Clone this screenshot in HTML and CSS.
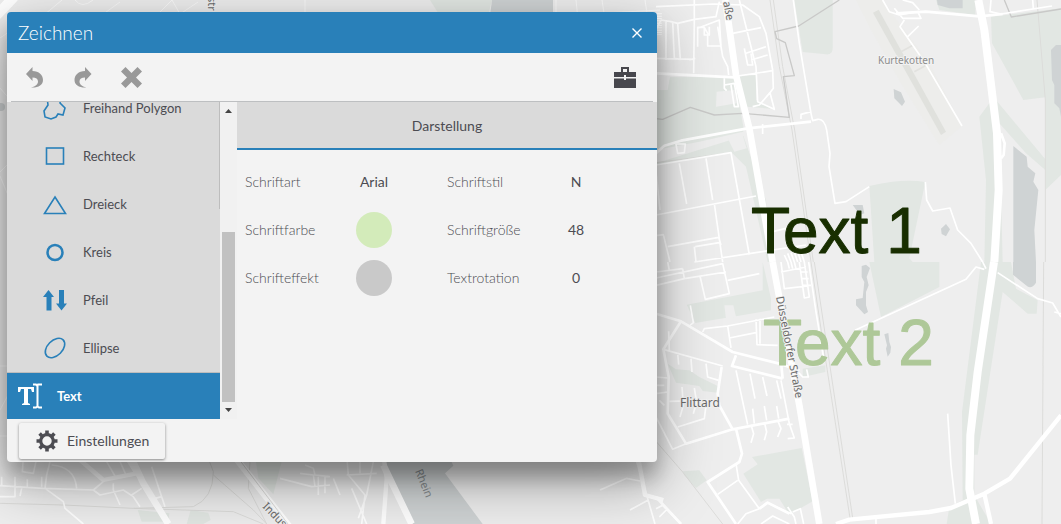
FILE: index.html
```html
<!DOCTYPE html>
<html lang="de">
<head>
<meta charset="utf-8">
<title>Zeichnen</title>
<link rel="stylesheet" href="styles.css">
</head>
<body>
<svg class="map" viewBox="0 0 1061 524" preserveAspectRatio="xMinYMin slice" role="img" aria-label="Karte">
  <rect class="land" width="1061" height="524"/>
  <!-- north-east quarter -->
  <g transform="translate(656 0) scale(.33333)">
    <path class="green" d="M415 0H530V145Q530 165 510 163L440 156ZM840 0H958V45L850 30ZM1005 50L1215 25V525L1168 570V292L1102 300L1008 130ZM0 232L235 230L262 380V395L130 425L0 450ZM0 490L262 408L330 600L345 786H335L270 500L225 455L0 495ZM240 230L300 225V300L345 326L270 320ZM1000 310L1020 300L1168 478V510L1110 460L1030 370L1040 786H985L990 540L970 350ZM640 558Q740 534 808 546L760 775L770 786H655Z"/>
    <path class="land" d="M0 230H42L35 270H0ZM182 275L235 270L242 310L180 320ZM215 415L260 405L272 445L235 455Z"/>
    <path class="field" d="M600 0H680L715 50L820 190L918 378L850 435L735 250L640 80Z"/>
    <path class="runway" d="M651 38L668 29L870 395L855 405Z"/>
    <path class="minor runway-line" d="M735 155L772 135M775 215L808 197"/>
    <path class="water" d="M843 0H920V25H880L845 15ZM1215 135L1200 135 1185 150 1188 240 1195 255V310L1210 325 1215 350ZM713 267L735 277 747 305 738 318 715 295ZM855 686L870 672 882 688 870 709 857 702ZM590 615H620L625 640 612 645ZM590 660L612 662 607 680 595 676ZM1072 438L1112 470 1115 500 1138 520 1132 545 1147 570 1135 690 1140 786H1072Z"/>
    <path class="rail" d="M342 0L370 200 408 390 465 786M352 0L380 200 416 390 472 786M1143 0L1168 300V786M0 488L225 458"/>
    <path class="border" d="M0 356L20 358 103 322 175 345 260 340 400 352 382 230 415 227 388 128 362 116 357 95 428 78 550 0M1045 0L1066 51 1215 27"/>
    <path class="minor" d="M0 20L175 12L260 15L310 50L330 100L350 210L352 265L342 278L310 315L290 320M250 0L300 200 305 305 355 328 342 278M115 0V60L113 220M0 90L15 60 45 65 65 70 115 58 180 50 190 5M30 60V180M50 65L55 175 73 178 65 70M0 175L115 178M125 140V82H145L155 100V138H195L190 60L125 85M145 85V105H160V80M185 80L200 170 215 200 218 225M230 100L315 83M245 228L350 212M270 160L330 140M265 145L275 195H290L285 160M285 180L335 165M205 235V265L212 272M205 255L235 250L247 320H235L225 255M100 180L118 175M412 0L430 130 465 340 470 362 485 358Q505 355 512 390L522 460 519 500 537 610 570 605 640 560M435 357V343L465 335M320 372V402M0 645L300 588M0 495L225 458 280 765M70 490L92 612M150 475L170 600M175 612L200 786M0 515L12 630M0 707L22 704 42 786M35 740L188 712 195 735M115 740L120 786M118 740L190 728M60 432H88L85 458 65 460ZM115 786L450 735M330 700L410 680M385 765L395 786M395 760L405 786M405 758L415 786M415 756L425 786M425 755L435 786M435 755L445 786M680 0L700 35 730 45 785 35 795 55 740 55 715 25M740 0L770 8 790 30M745 60L732 80 808 190 918 378M755 110L788 78M808 546L812 600 830 633 882 624 905 690 945 730 980 786M1005 0L1002 35 1035 42 1188 18M1130 0L1132 25"/>
    <path class="medium" d="M0 220L235 232M0 460L25 437 75 422 275 385 465 365M720 40L810 35 970 49 1040 42M1035 400L1046 430 1043 465 1035 475"/>
    <path class="major" d="M208 0L240 225 280 385 350 786"/>
    <path class="highway" d="M967 0L985 90 1023 400 1028 570 1015 786"/>
    <path class="ladder" d="M4 40V105M8 40V105M12 40V105"/>
  </g>
  <!-- south-east quarter -->
  <g transform="translate(656 262) scale(.33333)">
    <path class="green" d="M640 0H850V75L675 165ZM320 0L345 110 345 145 118 183 92 128 320 85ZM975 0H1065L1080 80 1145 115 1142 155H1115L1040 90 965 578H955V700L990 760 1005 786H872L880 735 920 715 918 450ZM288 585L437 558 470 718 405 755 395 750 370 710 333 710 315 720 262 635 305 607ZM440 320L508 310V330L440 345ZM35 305L60 322 100 325 130 345 185 372V392L140 387 130 372 60 362ZM80 628L130 625 152 655 120 678 85 640Z"/>
    <path class="land" d="M205 130L232 130 240 165 210 170Z"/>
    <path class="water" d="M1071 0H1140V62Q1125 85 1110 70L1071 38ZM617 12L630 8 642 18 632 45 638 70 630 90V130L636 150 625 157 600 130V112L620 108 625 60 617 45ZM685 217L697 213 700 240 705 255 703 272 695 284 690 260 693 250Z"/>
    <path class="rail" d="M465 0L510 300 582 768M475 0L520 300 590 768M1163 0L1158 786M0 538L80 630 200 786"/>
    <path class="minor" d="M0 48L200 5L220 95 148 112 132 42M0 70L85 50 80 20M0 30L80 20M35 0L40 25M85 50L210 30M215 55L310 35M103 130L112 182 102 190M140 210L145 200 215 192 355 165M215 192L225 258M220 228L300 212M300 172L303 248 365 250M312 170V245M22 262L200 312M65 275L68 308M105 290L108 330M150 305L155 345 188 355M240 325L275 488M282 335L297 410M320 345L333 402M362 355L375 410M375 355L400 485 415 528 395 530M0 345L35 348M0 395L35 390M38 208L40 265M0 465L50 562 90 545M65 495L145 470 152 415 40 418M78 375L82 430 72 465M115 378L122 420 112 455M290 440L295 485M325 432L332 475M362 432L368 470M285 488L293 515 285 542M325 480L332 510 325 535M365 475L375 500 365 525M393 487H410M25 370H0M25 430L10 415M240 605L248 655 310 740 333 722 405 755M185 697L245 655M245 786L270 755 310 740M315 786L350 762 400 786M395 735L415 765 420 786M410 750L433 740 443 786M0 740L20 730 75 786M10 765L35 740M375 0L385 80 455 72M375 30L450 15M395 0L400 20M405 0L410 20M415 0L420 20M430 0L445 108 460 105 445 0M435 30H455M435 50H458M438 70H465M458 0L480 150 505 300M408 310L440 345 457 345 452 322M597 205L930 52 960 15 985 22M980 0L990 20M1025 32L1145 110 1190 123 1215 165M1215 155L1195 150M875 455L885 610 898 725M660 770V786"/>
    <path class="medium" d="M0 155L75 178 230 270 370 305 430 325M75 178L22 262 38 345 35 455 90 545 230 502 190 430 185 395 197 315M240 280L228 312 380 350M230 502L400 470M240 500L258 575 250 600 155 660 240 786M310 740L335 722 400 755M375 300L380 350M0 705L75 786"/>
    <path class="major" d="M350 0L430 430 490 786"/>
    <path class="medium wide" d="M540 786L580 773 820 750 885 738 985 695 1062 650 1215 460M985 695L1005 786"/>
    <path class="highway" d="M1014 0L965 330 943 520 940 680 960 786"/>
  </g>
  <!-- strip below and beside the window -->
  <g transform="translate(0 455) scale(.33333)">
    <path class="green" d="M413 165L508 175 505 200H425ZM572 165L625 173 632 195 610 207H560ZM765 0H850L820 118 775 70Z"/>
    <path class="water" d="M1145 0H1345L1360 32 1335 55 1448 207H1240L1160 40Z"/>
    <path class="rail" d="M0 145L190 150 400 160 580 155Q640 130 640 50L625 10M640 60L760 165 800 207M400 160L700 170 790 207M750 20L745 100 800 207"/>
    <path class="minor" d="M0 92L130 100 280 105 300 120 370 105 400 125 420 155M0 125H45V65M5 65V95M60 123L65 100M82 73V100M70 10L67 50 100 55 110 10M155 0L140 60 135 100 190 140 195 160 250 207M155 30Q225 35 230 100M125 65V95M280 105L310 80M340 85V105L360 150M395 120L425 100M320 20L350 72M360 20L378 60M455 35L495 155M465 130L485 125M840 70L935 95 990 90M900 55L940 60 945 95M915 30L940 40 945 60 990 65M955 65V120M975 65V115M1040 0L1045 60 1095 120 1085 207M1100 207L1055 100M1120 20L1100 120 1075 190M1040 60L1130 55M1080 20V55M1000 70L1020 120M1800 105L1880 70 1920 78M1890 165L1945 135M1910 20L1940 120 1965 207"/>
    <path class="medium wide" d="M240 15L310 75 410 55 385 15M1150 0L1160 70 1150 207M1915 10L1935 120 1990 135"/>
    <path class="major" d="M390 0L430 85 505 207M700 0L880 230M1150 30L1235 207"/>
    <path class="rail" d="M715 10L870 215"/>
  </g>
  <path class="corner-road" d="M-4 16L14 -3"/>
  <path class="green" d="M430 0H492L488 16H440Z"/>
  <path class="water" d="M492 0H553V16H490Z"/>
  <path class="thin" d="M38 20L62 0M95 20L120 2M75 0Q82 9 93 0M158 14L172 0 180 14 198 2M305 0V20M556 0V20M576 0L578 20M602 0L605 20M645 0L648 20M605 13L660 10M0 38L18 26M0 88L12 102M0 172L10 162M0 176L10 200M0 366H10M0 410L8 395M0 436H10"/>
  <circle class="water" cx="1" cy="107" r="4"/>
  <text class="place small" x="878" y="64">Kurtekotten</text>
  <text class="place" x="680" y="407">Flittard</text>
  <text class="drawn drawn-dark" x="751" y="253">Text 1</text>
  <text class="drawn drawn-light" x="763" y="365">Text 2</text>
  <text class="street" transform="translate(776 297) rotate(79)">Düsseldorfer Straße</text>
  <text class="street" transform="translate(723 2) rotate(79)">aße</text>
  <text class="street" transform="translate(208 -3) rotate(90)">str</text>
  <text class="street" transform="translate(262 507) rotate(46)">Indus</text>
  <text class="river" transform="translate(415 471) rotate(68)">Rhein</text>
</svg>

<section class="window" aria-labelledby="window-title">
  <header class="titlebar">
    <h1 id="window-title">Zeichnen</h1>
    <button class="close" type="button" aria-label="Schließen">
      <svg width="10" height="10" viewBox="0 0 10 10"><path d="M.5.5l9 9M9.5.5l-9 9" fill="none" stroke="currentColor" stroke-width="1.4"/></svg>
    </button>
  </header>
  <div class="toolbar">
    <button type="button" aria-label="Rückgängig"><svg width="18" height="21" viewBox="0 0 18 21"><path d="M0 7L6.500 0V4C13 4 17 8 17 13C17 18 12 21 5 20.500C10 19.500 12 17 12 14.500C12 12 10 10.500 6.500 10.500V14Z"/></svg></button>
    <button type="button" aria-label="Wiederholen"><svg width="18" height="21" viewBox="0 0 18 21"><path d="M17.500 7L11 0V4C4.500 4 .5 8 .5 13C.5 18 5.500 21 12.500 20.500C7.500 19.500 5.500 17 5.500 14.500C5.500 12 7.500 10.500 11 10.500V14Z"/></svg></button>
    <button type="button" aria-label="Löschen"><svg width="21" height="21" viewBox="0 0 21 21"><path d="M4.500 0L10.500 6 16.500 0 21 4.500 15 10.500 21 16.500 16.500 21 10.500 15 4.500 21 0 16.500 6 10.500 0 4.500Z"/></svg></button>
    <button class="toolbox" type="button" aria-label="Werkzeuge"><svg width="22" height="21" viewBox="0 0 22 21"><path fill-rule="evenodd" d="M7 5V0H15V5H22V10H12V8H10V10H0V5ZM9 2V5H13V2ZM0 11.500H10V13H12V11.500H22V21H0Z"/></svg></button>
  </div>
  <div class="body">
    <nav class="tools" aria-label="Zeichenwerkzeuge">
      <button class="tool" type="button"><svg width="24" height="24" viewBox="0 0 24 24"><path d="M4 1L5 9 1 15 2 21 8 23 13 21 15 18 20 19 22 12 17 7 18 1Z"/></svg>Freihand Polygon</button>
      <button class="tool" type="button"><svg width="24" height="24" viewBox="0 0 24 24"><rect x="3.500" y="4" width="17" height="16"/></svg>Rechteck</button>
      <button class="tool" type="button"><svg width="24" height="24" viewBox="0 0 24 24"><path d="M12 5L22.500 21.500H1.500Z"/></svg>Dreieck</button>
      <button class="tool" type="button"><svg width="24" height="24" viewBox="0 0 24 24"><circle class="bold" cx="12" cy="12.500" r="7.500"/></svg>Kreis</button>
      <button class="tool" type="button"><svg width="24" height="24" viewBox="0 0 24 24"><path class="solid" d="M5.500 2L11 9H8.500V22.500H3.500V9H0ZM16 2H21V15.500H24L18.500 22.500 13 15.500H16Z"/></svg>Pfeil</button>
      <button class="tool" type="button"><svg width="24" height="24" viewBox="0 0 24 24"><ellipse cx="12" cy="12" rx="11.500" ry="7.500" transform="rotate(-45 12 12)"/></svg>Ellipse</button>
      <button class="tool active" type="button"><svg width="25" height="26" viewBox="0 0 25 26"><path d="M0 4H16V9H14L13 6H10V20L12 21V22H4V21L6 20V6H3L2 9H0Z" fill="#fff" stroke="none"/><path d="M15 1.500H18L19 2.500 20 1.500H24M19.500 2V24M15 24.500H18L19.500 23.500 21 24.500H24" stroke="#fff" stroke-width="2"/></svg>Text</button>
    </nav>
    <div class="scrollbar" aria-hidden="true">
      <svg width="17" height="17" viewBox="0 0 17 17"><path d="M5 11L8.500 7 12 11Z"/></svg>
      <div class="track"><div class="thumb"></div></div>
      <svg width="17" height="17" viewBox="0 0 17 17"><path d="M5 6L8.500 10 12 6Z"/></svg>
    </div>
    <div class="panel">
      <button class="tab" type="button">Darstellung</button>
      <div class="options">
        <span class="label" id="font">Schriftart</span><button type="button" aria-describedby="font">Arial</button>
        <span class="label second" id="style">Schriftstil</span><button type="button" aria-describedby="style">N</button>
        <span class="label" id="color">Schriftfarbe</span><button class="swatch green-swatch" type="button" aria-labelledby="color"></button>
        <span class="label second" id="size">Schriftgröße</span><button type="button" aria-describedby="size">48</button>
        <span class="label" id="effect">Schrifteffekt</span><button class="swatch gray-swatch" type="button" aria-labelledby="effect"></button>
        <span class="label second" id="rotation">Textrotation</span><button type="button" aria-describedby="rotation">0</button>
      </div>
    </div>
  </div>
  <footer class="footer">
    <button class="settings" type="button"><svg width="22" height="22" viewBox="-11 -11 22 22"><circle r="6.300" fill="none" stroke="currentColor" stroke-width="3.200"/><path d="M0-10.500V-7M0 10.500V7M-10.500 0H-7M10.500 0H7M-7.400-7.400L-5-5M7.400 7.400L5 5M-7.400 7.400L-5 5M7.400-7.400L5-5" stroke="currentColor" stroke-width="3.600"/></svg>Einstellungen</button>
  </footer>
</section>
</body>
</html>
```
FILE: styles.css
```css
* { box-sizing: border-box; }
body { margin: 0; min-height: 100vh; overflow: hidden; position: relative; font: 14px/20px Lato, sans-serif; color: #4c4c52; background: #eee; }
button { margin: 0; padding: 0; border: 0; background: none; font: inherit; color: inherit; cursor: pointer; }

.map { display: block; width: 100%; height: 100vh; }
.land { fill: #eee; }
.green { fill: #e2e7e3; }
.field { fill: #ededeb; }
.runway { fill: #e0e1dd; }
.water { fill: #cfd3d4; }
.map path { stroke-linejoin: round; }
.rail, .border, .minor, .medium, .major, .highway, .ladder, .thin, .corner-road { fill: none; }
.rail { stroke: #dcdcda; stroke-width: 3; }
.border { stroke: #c9c9c8; stroke-width: 4; }
.minor { stroke: #fff; stroke-width: 5; }
.runway-line { stroke: #e2e2df; }
.medium { stroke: #fff; stroke-width: 8; }
.wide { stroke-width: 13; }
.major { stroke: #fff; stroke-width: 20; }
.highway { stroke: #fff; stroke-width: 24; }
.ladder { stroke: #fff; stroke-width: 11; stroke-dasharray: 3 4; }
.thin { stroke: #fafafa; stroke-width: 1; }
.corner-road { stroke: #fff; stroke-width: 10; }
.place, .street, .river { font-family: "Noto Sans", sans-serif; fill: #6a6a6a; stroke: #f2f2f2; stroke-width: 2px; paint-order: stroke; }
.place { font-size: 12px; }
.small { font-size: 10px; fill: #8d8d8d; }
.street { font-size: 11px; }
.river { font-size: 11px; fill: #83898b; stroke: none; }
.drawn { font-family: "Liberation Sans", sans-serif; font-size: 64px; stroke-width: 1px; stroke-linejoin: round; }
.drawn-dark { fill: #182e00; stroke: #182e00; }
.drawn-light { fill: #aec898; stroke: #aec898; }

.window { position: absolute; top: 12px; left: 7px; width: 650px; max-width: calc(100% - 14px); overflow: hidden; border-radius: 4px; background: #f3f3f3; box-shadow: 0 19px 60px rgba(0,0,0,.36), 0 15px 20px rgba(0,0,0,.26); }
.titlebar { display: flex; align-items: center; justify-content: space-between; height: 41px; padding: 0 15px 0 11px; background: #2980b9; color: #fff; }
.titlebar h1 { margin: 0; font-size: 19px; font-weight: 300; line-height: 24px; }
.close { display: flex; }
.toolbar { display: flex; align-items: center; height: 49px; margin: 0 4px; padding-right: 4px; border-bottom: 1px solid #bdbfc1; fill: #999; }
.toolbar button { display: flex; justify-content: center; width: 48px; }
.toolbar .toolbox { margin-left: auto; fill: #47474d; }

.body { display: flex; height: 317px; }
.tools { display: flex; flex-direction: column; justify-content: flex-end; flex: 0 0 213px; overflow: hidden; background: linear-gradient(#bdbdbd, #bdbdbd) right top / 1px 107px no-repeat, #dadada; }
.tool { display: flex; align-items: center; flex: none; gap: 16px; height: 48px; padding-left: 36px; font-size: 13px; text-align: left; }
.tool svg { fill: none; stroke: #2980b9; stroke-width: 1.6; }
.tool .solid { fill: #2980b9; stroke: none; }
.tool .bold { stroke-width: 2.5; }
.active { height: 47px; border-top: 1px solid #bdbdbd; padding-left: 11px; gap: 14px; background: #2980b9; color: #fff; background-clip: padding-box; font-weight: 700; }
.scrollbar { display: flex; flex-direction: column; flex: 0 0 17px; background: #f1f1f1; fill: #444; }
.track { display: flex; align-items: flex-end; flex: 1; padding: 0 2px; }
.thumb { width: 100%; height: 60%; background: #c1c1c1; }
.panel { flex: 1; min-width: 0; }
.tab { display: block; width: 100%; height: 48px; padding-top: 2px; border-bottom: 2px solid #2980b9; background: #dadada; }
.options { display: grid; grid-template-columns: 105px 48px 154px 48px; grid-auto-rows: 48px; align-items: center; justify-items: center; padding: 8px; }
.label { justify-self: start; font-weight: 300; }
.second { padding-left: 49px; }
.swatch { width: 36px; height: 36px; border-radius: 50%; }
.green-swatch { background: #d3ebba; }
.gray-swatch { background: #c9c9c9; }

.footer { display: flex; padding: 4px 12px 3px; }
.settings { display: flex; align-items: center; gap: 9px; height: 36px; padding: 0 16px 0 17px; border-radius: 2px; background: #f3f3f3; box-shadow: 0 1px 3px rgba(0,0,0,.45); }
```
